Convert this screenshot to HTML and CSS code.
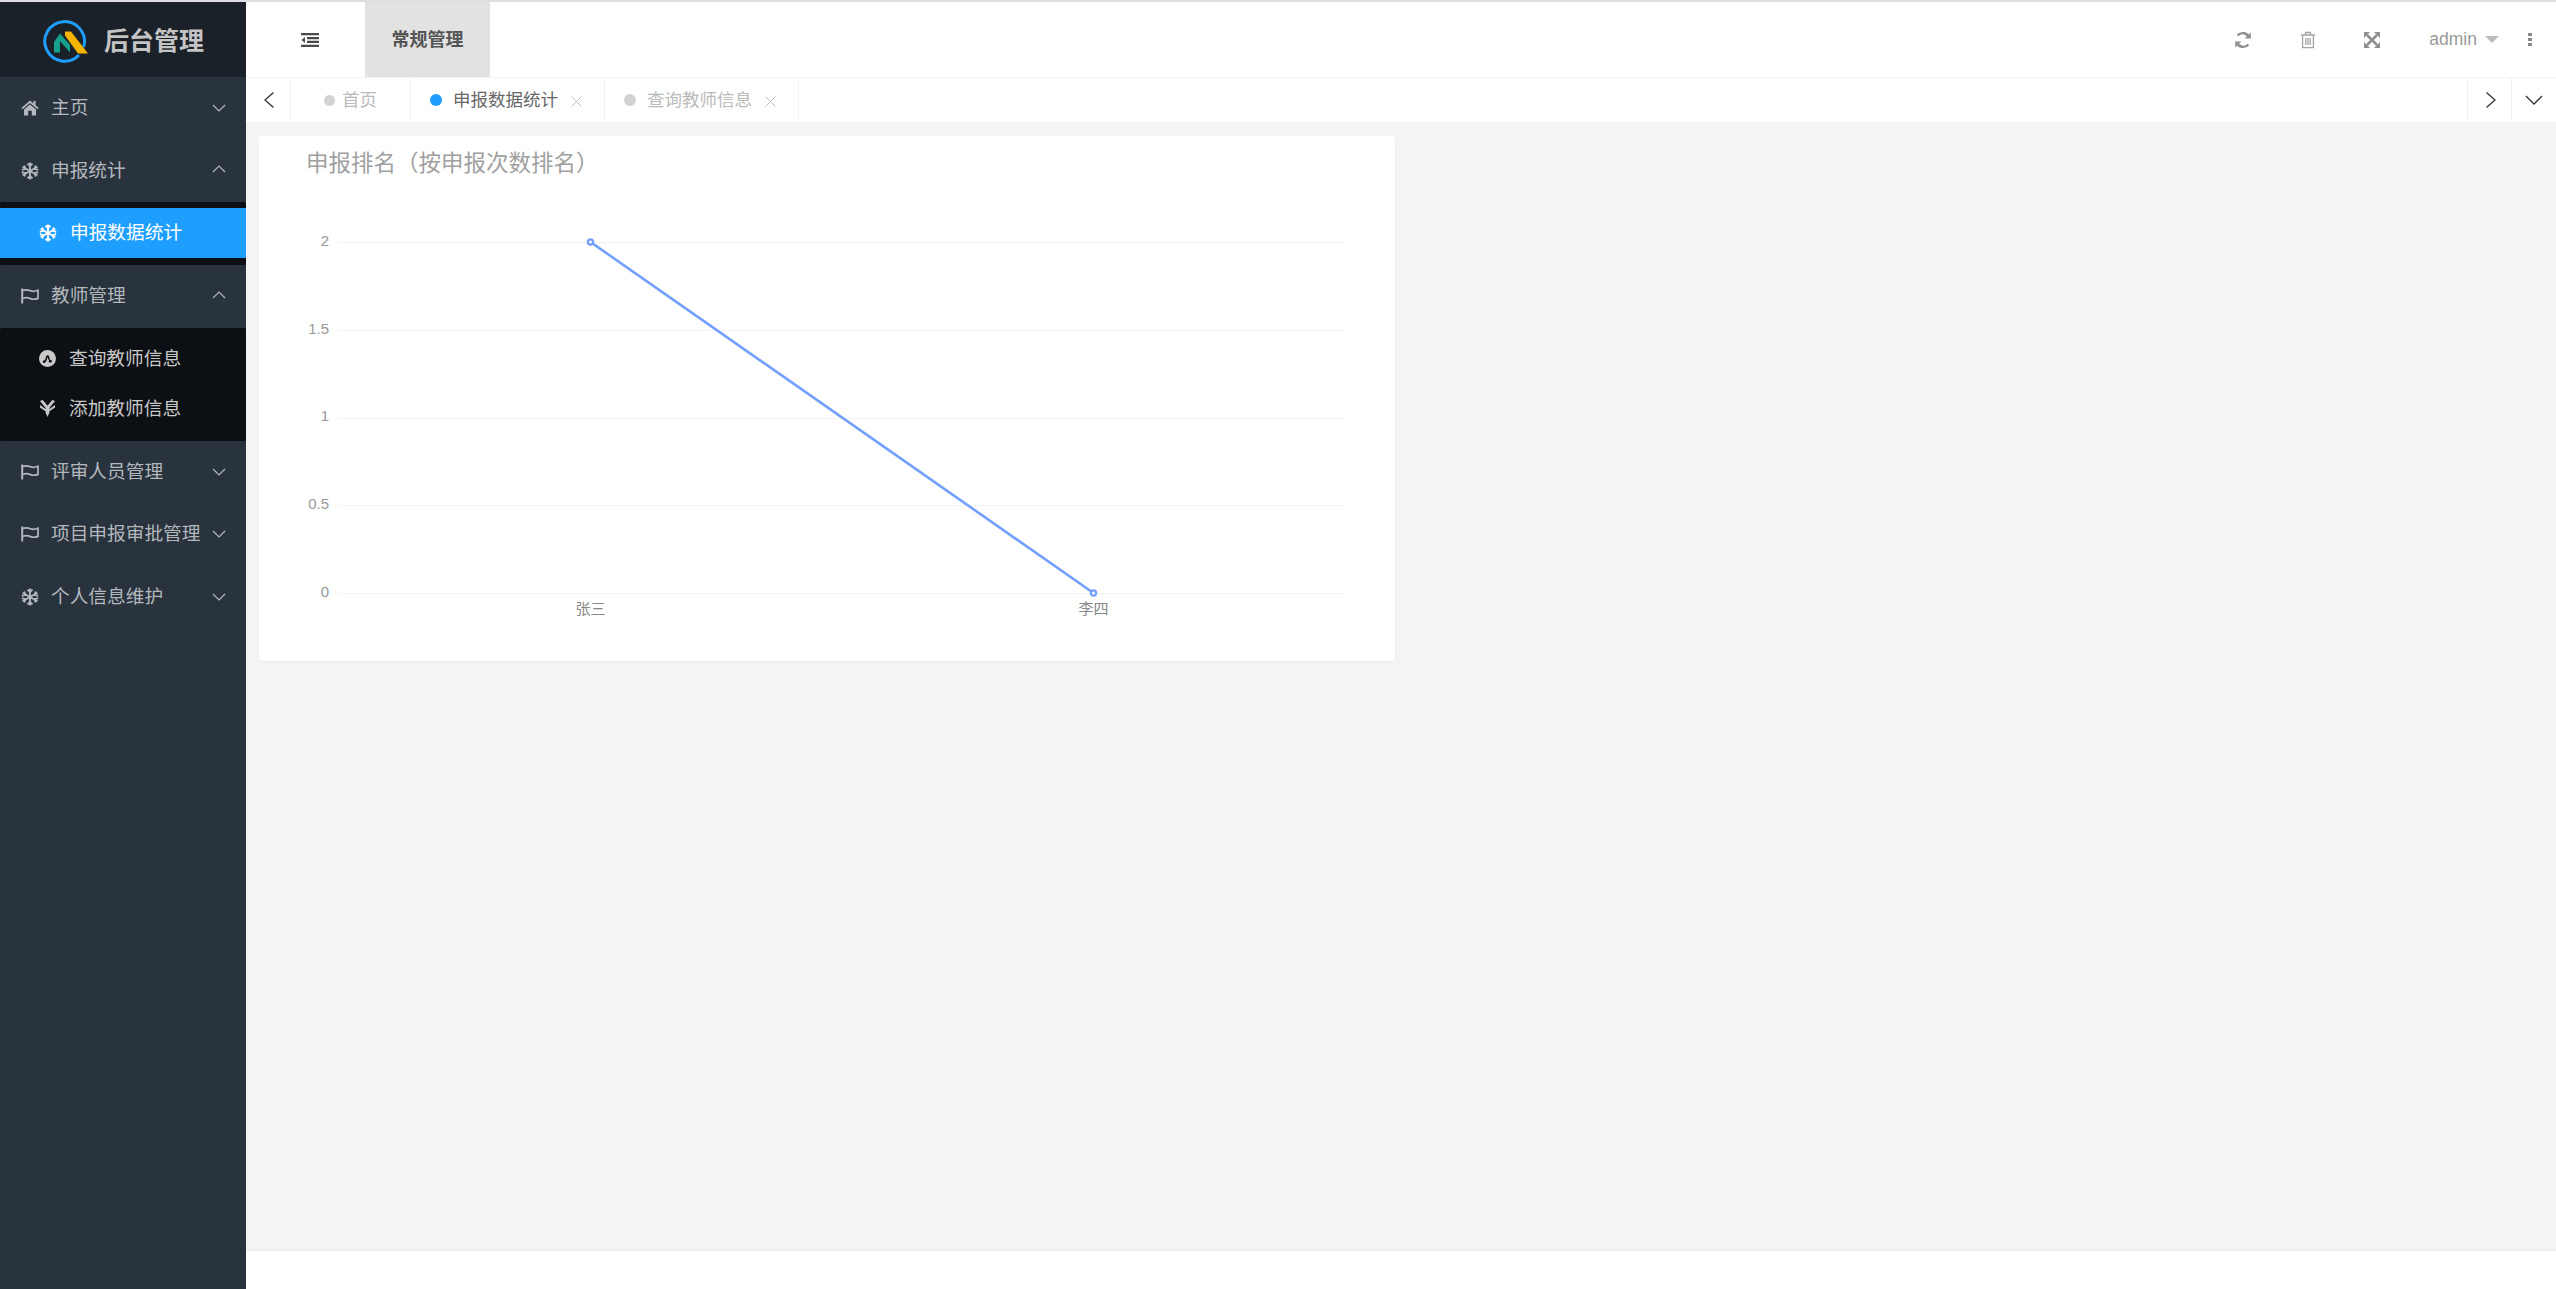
FILE: index.html
```html
<!DOCTYPE html>
<html lang="zh-CN">
<head>
    <meta charset="UTF-8">
    <title>后台管理</title>
    <link rel="stylesheet" href="styles.css">
</head>
<body>
    <svg class="defs" width="0" height="0">
        <symbol id="i-home" viewBox="0 0 18 16">
            <path d="M9 0.5 L0.3 8 L1.5 9.3 L9 3 L16.5 9.3 L17.7 8 L14.6 5.3 V1 H12.4 V3.4 Z M9 4.4 L3 9.4 V15.5 H7.2 V10.8 H10.8 V15.5 H15 V9.4 Z" fill="currentColor"/>
        </symbol>
        <symbol id="i-snow" viewBox="0 0 18 18">
            <g stroke="currentColor" fill="none" stroke-width="1.9">
                <path d="M9 0.5 V17.5 M1.6 4.7 L16.4 13.3 M16.4 4.7 L1.6 13.3"/>
                <path d="M6.5 1.6 L9 4 L11.5 1.6 M6.5 16.4 L9 14 L11.5 16.4 M0.8 7.8 L4.2 6.9 L3.3 3.5 M17.2 7.8 L13.8 6.9 L14.7 3.5 M0.8 10.2 L4.2 11.1 L3.3 14.5 M17.2 10.2 L13.8 11.1 L14.7 14.5"/>
            </g>
        </symbol>
        <symbol id="i-flag" viewBox="0 0 18 16">
            <path d="M1.2 0.5 V15.5" stroke="currentColor" stroke-width="2" fill="none"/>
            <path d="M2 2.4 C5 1.2 7 1.8 9.5 2.8 C12 3.8 14.5 3.2 17 2.2 V10.4 C14.5 11.4 12 11.6 9.5 10.6 C7 9.6 5 9.2 2 10.2" stroke="currentColor" stroke-width="1.7" fill="none"/>
        </symbol>
        <symbol id="i-circle" viewBox="0 0 16 16">
            <circle cx="8" cy="8" r="8" fill="currentColor"/>
            <path d="M5.4 11 C6.4 10 6.8 8.6 7.2 7 C7.5 5.4 8.8 5.4 9 6.8 L9.6 9.2" stroke="#0c0f13" stroke-width="1.5" fill="none"/>
            <circle cx="4.8" cy="11" r="1.2" fill="#0c0f13"/>
            <circle cx="10.6" cy="10.6" r="1.4" fill="#0c0f13"/>
        </symbol>
        <symbol id="i-vee" viewBox="0 0 16 18">
            <path d="M0 1 L3 0 L8 6 L13 0 L16 1 L10 8.4 V9.6 L16 5.4 V8 L10 12 V13.5 L8 18 L6 13.5 V12 L0 8 V5.4 L6 9.6 V8.4 Z" fill="currentColor"/>
        </symbol>
        <symbol id="i-down" viewBox="0 0 14 8">
            <path d="M1 1 L7 7 L13 1" stroke="currentColor" stroke-width="1.2" fill="none"/>
        </symbol>
        <symbol id="i-up" viewBox="0 0 14 8">
            <path d="M1 7 L7 1 L13 7" stroke="currentColor" stroke-width="1.2" fill="none"/>
        </symbol>
    </svg>

    <div class="admin">
        <!-- left menu -->
        <aside class="side">
            <div class="logo">
                <svg class="logo-mark" viewBox="0 0 48 46">
                    <path d="M38 38 A19.8 19.8 0 1 1 42.6 30" stroke="#1e9fff" stroke-width="3" fill="none"/>
                    <path d="M13 25 L19 16.5 L29 28 V35.5 L19 24 V35.5 H13 Z" fill="#17a08c"/>
                    <path d="M24 14.5 H30 L47 36.5 H37 L24 18.5 Z" fill="#f5b400"/>
                </svg>
                <span class="logo-text">后台管理</span>
            </div>

            <div class="menu-item">
                <svg class="menu-icon"><use href="#i-home"/></svg>
                <span class="menu-text">主页</span>
                <svg class="chevron"><use href="#i-down"/></svg>
            </div>
            <div class="menu-item">
                <svg class="menu-icon"><use href="#i-snow"/></svg>
                <span class="menu-text">申报统计</span>
                <svg class="chevron open"><use href="#i-up"/></svg>
            </div>
            <div class="sub-menu">
                <div class="sub-item active">
                    <svg class="menu-icon"><use href="#i-snow"/></svg>
                    <span class="sub-text">申报数据统计</span>
                </div>
            </div>
            <div class="menu-item">
                <svg class="menu-icon"><use href="#i-flag"/></svg>
                <span class="menu-text">教师管理</span>
                <svg class="chevron open"><use href="#i-up"/></svg>
            </div>
            <div class="sub-menu">
                <div class="sub-item">
                    <svg class="menu-icon small"><use href="#i-circle"/></svg>
                    <span class="sub-text">查询教师信息</span>
                </div>
                <div class="sub-item">
                    <svg class="menu-icon small"><use href="#i-vee"/></svg>
                    <span class="sub-text">添加教师信息</span>
                </div>
            </div>
            <div class="menu-item">
                <svg class="menu-icon"><use href="#i-flag"/></svg>
                <span class="menu-text">评审人员管理</span>
                <svg class="chevron"><use href="#i-down"/></svg>
            </div>
            <div class="menu-item">
                <svg class="menu-icon"><use href="#i-flag"/></svg>
                <span class="menu-text">项目申报审批管理</span>
                <svg class="chevron"><use href="#i-down"/></svg>
            </div>
            <div class="menu-item">
                <svg class="menu-icon"><use href="#i-snow"/></svg>
                <span class="menu-text">个人信息维护</span>
                <svg class="chevron"><use href="#i-down"/></svg>
            </div>
        </aside>

        <div class="main">
            <!-- top bar -->
            <header class="top-bar">
                <div class="fold-btn">
                    <svg width="18" height="14" viewBox="0 0 18 14">
                        <path d="M0 1.2 H18 M6 5.2 H18 M6 8.8 H18 M0 12.8 H18" stroke="#4a4a4a" stroke-width="2.2" fill="none"/>
                        <path d="M4 4 V10 L0.5 7 Z" fill="#4a4a4a"/>
                    </svg>
                </div>
                <div class="top-tab"><span class="top-tab-text">常规管理</span></div>
                <div class="top-tools">
                    <svg class="tool" width="18" height="18" viewBox="0 0 18 18">
                        <path d="M15.2 6.5 A6.8 6.8 0 0 0 3.6 4.6 M2.8 11.5 A6.8 6.8 0 0 0 14.4 13.4" stroke="#8f8f8f" stroke-width="2.4" fill="none"/>
                        <path d="M16.8 1.4 V7.6 H10.6 Z M1.2 16.6 V10.4 H7.4 Z" fill="#8f8f8f"/>
                    </svg>
                    <svg class="tool trash" width="16" height="18" viewBox="0 0 16 18">
                        <path d="M1 4 H15 M5.5 4 V1.5 H10.5 V4 M2.6 4 V16.6 H13.4 V4 M5.8 7 V14 M8 7 V14 M10.2 7 V14" stroke="#a3a3a3" stroke-width="1.3" fill="none"/>
                    </svg>
                    <svg class="tool full" width="18" height="18" viewBox="0 0 18 18">
                        <path d="M4 4 L14 14 M14 4 L4 14" stroke="#8f8f8f" stroke-width="2.6" fill="none"/>
                        <path d="M1 1 H7 L1 7 Z M17 1 V7 L11 1 Z M1 17 V11 L7 17 Z M17 17 H11 L17 11 Z" fill="#8f8f8f"/>
                    </svg>
                    <span class="user-name">admin</span>
                    <span class="caret"></span>
                    <span class="dots"><i></i><i></i><i></i></span>
                </div>
            </header>

            <!-- open tabs -->
            <nav class="tab-bar">
                <div class="tab-arrow">
                    <svg class="arrow-prev" width="10" height="16" viewBox="0 0 10 16"><path d="M9.5 0.5 L1 8 L9.5 15.5" stroke="#333" stroke-width="1.3" fill="none"/></svg>
                </div>
                <div class="tab home-tab"><span class="dot"></span><span class="tab-text">首页</span></div>
                <div class="tab current"><span class="dot"></span><span class="tab-text">申报数据统计</span>
                    <svg class="close" width="11" height="11" viewBox="0 0 11 11"><path d="M0.5 0.5 L10.5 10.5 M10.5 0.5 L0.5 10.5" stroke="#c0c0c0" stroke-width="1"/></svg>
                </div>
                <div class="tab"><span class="dot"></span><span class="tab-text">查询教师信息</span>
                    <svg class="close" width="11" height="11" viewBox="0 0 11 11"><path d="M0.5 0.5 L10.5 10.5 M10.5 0.5 L0.5 10.5" stroke="#c0c0c0" stroke-width="1"/></svg>
                </div>
                <div class="tab-spacer"></div>
                <div class="tab-arrow right">
                    <svg class="arrow-next" width="10" height="16" viewBox="0 0 10 16"><path d="M0.5 0.5 L9 8 L0.5 15.5" stroke="#333" stroke-width="1.3" fill="none"/></svg>
                </div>
                <div class="tab-arrow right last">
                    <svg width="18" height="10" viewBox="0 0 18 10"><path d="M1 1 L9 9 L17 1" stroke="#333" stroke-width="1.3" fill="none"/></svg>
                </div>
            </nav>

            <main class="content">
                <section class="card">
                    <h2 class="card-title">申报排名（按申报次数排名）</h2>
                    <svg class="chart" width="1136" height="500" viewBox="259 161 1136 500">
                        <g class="grid">
                            <line x1="339" x2="1345" y1="242.5" y2="242.5"/>
                            <line x1="339" x2="1345" y1="330.5" y2="330.5"/>
                            <line x1="339" x2="1345" y1="418.5" y2="418.5"/>
                            <line x1="339" x2="1345" y1="505.5" y2="505.5"/>
                            <line x1="339" x2="1345" y1="593.5" y2="593.5"/>
                        </g>
                        <g class="y-labels">
                            <text x="329" y="246">2</text>
                            <text x="329" y="334">1.5</text>
                            <text x="329" y="421">1</text>
                            <text x="329" y="509">0.5</text>
                            <text x="329" y="597">0</text>
                        </g>
                        <g class="x-labels">
                            <text x="590.5" y="614">张三</text>
                            <text x="1093.5" y="614">李四</text>
                        </g>
                        <line class="series" x1="590.5" y1="242" x2="1093.5" y2="593"/>
                        <circle class="point" cx="590.5" cy="242" r="2.6"/>
                        <circle class="point" cx="1093.5" cy="593" r="2.6"/>
                    </svg>
                </section>
            </main>

            <footer class="footer"></footer>
        </div>
    </div>
</body>
</html>
```

FILE: styles.css
```css
* {
    box-sizing: border-box;
}

html, body {
    height: 100%;
}

body {
    margin: 0;
    overflow: hidden;
    background-color: #fff;
    border-top: 2px solid #dddde3;
    font-family: "Noto Sans CJK SC", "Liberation Sans", sans-serif;
    font-size: 18.7px;
}

.defs {
    display: block;
    height: 0;
}

.admin {
    display: flex;
    height: 100%;
}

/* left menu */
.side {
    width: 246px;
    flex-shrink: 0;
    background-color: #28333e;
    color: #b4b8bc;
}

.logo {
    height: 75px;
    background-color: #1a2129;
    display: flex;
    align-items: center;
    padding-left: 41px;
}

.logo-mark {
    width: 48px;
    height: 46px;
}

.logo-text {
    margin-left: 15px;
    margin-bottom: 2px;
    font-size: 25px;
    font-weight: 700;
    color: #c4c4c4;
}

.menu-item {
    height: 62.5px;
    display: flex;
    align-items: center;
    padding-left: 21px;
}

.menu-icon {
    width: 18px;
    height: 18px;
    flex-shrink: 0;
}

.menu-icon.small {
    width: 17px;
    height: 17px;
}

.menu-text {
    margin-left: 12px;
    margin-bottom: 5px;
    white-space: nowrap;
}

.chevron {
    width: 14px;
    height: 8px;
    margin-left: auto;
    margin-right: 20px;
    flex-shrink: 0;
}

.chevron.open {
    margin-bottom: 3px;
}

.sub-menu {
    background-color: #0c0f13;
    padding: 6px 0 7px;
    border-radius: 2px;
}

.sub-item {
    height: 50px;
    display: flex;
    align-items: center;
    padding-left: 39px;
    gap: 13px;
    color: #c8c8c8;
}

.sub-text {
    margin-bottom: 5px;
}

.sub-item.active {
    background-color: #1e9fff;
    color: #fff;
}

/* top bar */
.main {
    flex: 1;
    min-width: 0;
    display: flex;
    flex-direction: column;
}

.top-bar {
    height: 75px;
    display: flex;
    align-items: stretch;
}

.fold-btn {
    width: 119px;
    padding-left: 9px;
    display: flex;
    align-items: center;
    justify-content: center;
}

.top-tab {
    width: 125px;
    background-color: #e2e2e2;
    color: #555;
    font-size: 18px;
    font-weight: 700;
    display: flex;
    align-items: center;
    justify-content: center;
}

.top-tab-text {
    margin-bottom: 3px;
}

.top-tools {
    margin-left: auto;
    display: flex;
    align-items: center;
    color: #999;
    padding-right: 24px;
}

.tool {
    display: block;
}

.trash {
    margin-left: 48px;
}

.full {
    margin-left: 47px;
}

.user-name {
    margin-left: 48px;
    font-family: "Liberation Sans", sans-serif;
    font-size: 17.5px;
}

.caret {
    width: 0;
    height: 0;
    margin-left: 8px;
    border-left: 7px solid transparent;
    border-right: 7px solid transparent;
    border-top: 7px solid #bbb;
}

.dots {
    margin-left: 29px;
    display: flex;
    flex-direction: column;
    gap: 2px;
}

.dots i {
    display: block;
    width: 4px;
    height: 3px;
    background-color: #888;
}

/* tabs */
.tab-bar {
    height: 45px;
    border-top: 1px solid #f2f2f2;
    display: flex;
    align-items: stretch;
    color: #bbb;
    font-size: 17.5px;
}

.tab-arrow {
    width: 45px;
    border-right: 1px solid #f2f2f2;
    display: flex;
    align-items: center;
    justify-content: center;
}

.arrow-prev {
    margin-left: 2px;
}

.arrow-next {
    margin-left: 3px;
}

.tab-arrow.right {
    width: 44px;
    border-right: 0;
    border-left: 1px solid #f2f2f2;
}

.tab-arrow.right.last {
    width: 45px;
}

.tab {
    display: flex;
    align-items: center;
    padding: 0 22px 0 19px;
    border-right: 1px solid #f2f2f2;
    white-space: nowrap;
}

.tab.home-tab {
    padding: 0 33px;
}

.tab.current {
    color: #666;
}

.tab-text {
    margin-bottom: 3px;
}

.dot {
    width: 12px;
    height: 12px;
    border-radius: 50%;
    background-color: #d2d2d2;
    margin-right: 11px;
}

.home-tab .dot {
    width: 11px;
    height: 11px;
    margin-right: 7px;
}

.current .dot {
    background-color: #1e9fff;
}

.close {
    margin-left: 13px;
    margin-top: 2px;
}

.tab-spacer {
    flex: 1;
}

/* content */
.content {
    flex: 1;
    background-color: #f4f4f4;
    padding: 14px 13px;
}

.card {
    width: 1136px;
    height: 525px;
    background-color: #fff;
    border-radius: 3px;
    box-shadow: 0 1px 2px rgba(0, 0, 0, 0.04);
}

.card-title {
    margin: 0;
    height: 25px;
    padding-left: 47px;
    font-size: 22.5px;
    font-weight: 400;
    line-height: 51px;
    color: #a0a0a0;
}

.chart {
    display: block;
}

.grid line {
    stroke: #f3f3f3;
    stroke-width: 1;
}

.chart text {
    font-family: "Liberation Sans", "Noto Sans CJK SC", sans-serif;
    font-size: 15px;
    fill: #999;
}

.y-labels text {
    text-anchor: end;
}

.x-labels text {
    text-anchor: middle;
    fill: #888;
}

.series {
    stroke: #739fff;
    stroke-width: 2.6;
}

.point {
    fill: #fff;
    stroke: #739fff;
    stroke-width: 2.2;
}

.footer {
    height: 39px;
    border-top: 1px solid #eee;
    background-color: #fff;
}
```
